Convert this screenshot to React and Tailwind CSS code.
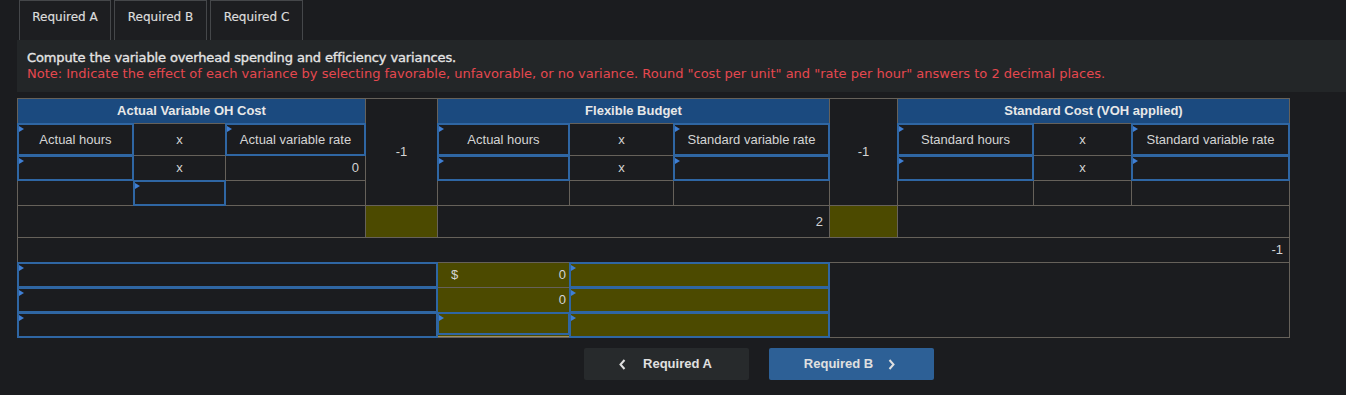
import React from "react";

const Tri = () => (
  <span className="absolute left-0 top-px h-0 w-0 border-y-[3px] border-l-[5px] border-y-transparent border-l-[#3f7fd4]" />
);

const Input = ({ children, className = "bg-[#1b1c1f]" }) => (
  <div className={`relative -m-px flex items-center justify-center border-2 border-[#2f66a3] ${className}`}>
    <Tri />
    {children}
  </div>
);

const Cell = ({ children, className = "" }) => (
  <div className={`flex items-center justify-center bg-[#1b1c1f] ${className}`}>{children}</div>
);

const Head = ({ children, className = "" }) => (
  <div className={`flex items-center justify-center bg-[#1b4a7f] font-bold text-[#e8e8e8] ${className}`}>
    {children}
  </div>
);

const Yellow = "bg-[#4c4a00]";

export default function App() {
  return (
    <div className="min-h-[395px] w-[1346px] bg-[#1b1c1f] text-[#d4d4d4]">
      {/* Tabs */}
      <div className="flex h-10 gap-[3px] pl-[19px] font-['DejaVu_Sans',sans-serif] text-[12px] text-[#dcdcdc] [-webkit-text-stroke:0.2px_#dcdcdc]">
        <div className="flex w-[92px] justify-center border-x border-t border-[#45474a] bg-[#1d1e21] pt-[7px]">Required A</div>
        <div className="flex w-[93px] justify-center border-x border-t border-[#45474a] bg-[#1d1e21] pt-[7px]">Required B</div>
        <div className="flex w-[93px] justify-center border-x border-t border-[#45474a] bg-[#1d1e21] pt-[7px]">Required C</div>
      </div>

      {/* Instruction panel */}
      <div className="ml-[17px] h-[52px] bg-[#232628] pl-[10px] pt-[10px] font-['DejaVu_Sans',sans-serif] text-[13px] leading-4">
        <div className="tracking-[-0.12px] text-[#e4e4e4] [-webkit-text-stroke:0.35px_#e4e4e4]">Compute the variable overhead spending and efficiency variances.</div>
        <div className="text-[#e5484f]">
          Note: Indicate the effect of each variance by selecting favorable, unfavorable, or no variance. Round "cost per unit" and "rate per hour" answers to 2 decimal places.
        </div>
      </div>

      {/* Table */}
      <div className="ml-[17px] mt-[6px] grid w-[1273px] grid-cols-[115px_91px_139px_71px_131px_103px_155px_67px_135px_97px_157px] grid-rows-[24px_31px_24px_24px_31px_24px_24px_24px_24px] gap-px bg-[#66615a] p-px font-['Liberation_Sans',Arial,sans-serif] text-[13px]">
        {/* Row 1 */}
        <Head className="col-span-3">Actual Variable OH Cost</Head>
        <Cell className="row-span-4">-1</Cell>
        <Head className="col-span-3">Flexible Budget</Head>
        <Cell className="row-span-4">-1</Cell>
        <Head className="col-span-3">Standard Cost (VOH applied)</Head>

        {/* Row 2 */}
        <Input>Actual hours</Input>
        <Cell>x</Cell>
        <Input>Actual variable rate</Input>
        <Input>Actual hours</Input>
        <Cell>x</Cell>
        <Input>Standard variable rate</Input>
        <Input>Standard hours</Input>
        <Cell>x</Cell>
        <Input>Standard variable rate</Input>

        {/* Row 3 */}
        <Input />
        <Cell>x</Cell>
        <Cell className="justify-end pr-[6px]">0</Cell>
        <Input />
        <Cell>x</Cell>
        <Input />
        <Input />
        <Cell>x</Cell>
        <Input />

        {/* Row 4 */}
        <Cell />
        <Input />
        <Cell />
        <Cell />
        <Cell />
        <Cell />
        <Cell />
        <Cell />
        <Cell />

        {/* Row 5 */}
        <Cell className="col-span-3" />
        <div className={Yellow} />
        <Cell className="col-span-3 justify-end pr-[6px]">2</Cell>
        <div className={Yellow} />
        <Cell className="col-span-3" />

        {/* Row 6 */}
        <Cell className="col-span-11 justify-end pr-[6px]">-1</Cell>

        {/* Row 7 */}
        <Input className="col-span-4 bg-[#1b1c1f]" />
        <div className={`${Yellow} flex items-center justify-between pl-[13px] pr-[3px]`}>
          <span>$</span>
          <span>0</span>
        </div>
        <Input className={`col-span-2 ${Yellow}`} />
        <Cell className="col-span-4 row-span-3" />

        {/* Row 8 */}
        <Input className="col-span-4 bg-[#1b1c1f]" />
        <div className={`${Yellow} flex items-center justify-end pr-[3px]`}>0</div>
        <Input className={`col-span-2 ${Yellow}`} />

        {/* Row 9 */}
        <Input className="col-span-4 bg-[#1b1c1f]" />
        <div className={`${Yellow} flex flex-col`}>
          <Input className={`flex-1 ${Yellow}`} />
          <div className="mt-[2px] h-px bg-[#9c8e62]" />
        </div>
        <Input className={`col-span-2 ${Yellow}`} />
      </div>

      {/* Buttons */}
      <div className="mt-[10px] flex gap-[20px] pl-[584px] font-['Liberation_Sans',Arial,sans-serif] text-[13px] font-bold text-[#e0e0e0]">
        <div className="flex h-8 w-[165px] items-center justify-center gap-[17px] rounded-[2px] bg-[#272a2c] pr-[2px]">
          <svg width="7" height="11" viewBox="0 0 7 11" fill="none">
            <path d="M5.5 1L1.5 5.5L5.5 10" stroke="#e0e0e0" strokeWidth="2" />
          </svg>
          <span>Required A</span>
        </div>
        <div className="flex h-8 w-[165px] items-center justify-center gap-[15px] rounded-[2px] bg-[#2d6096] pr-[4px]">
          <span>Required B</span>
          <svg width="7" height="11" viewBox="0 0 7 11" fill="none">
            <path d="M1.5 1L5.5 5.5L1.5 10" stroke="#e0e0e0" strokeWidth="2" />
          </svg>
        </div>
      </div>
    </div>
  );
}
